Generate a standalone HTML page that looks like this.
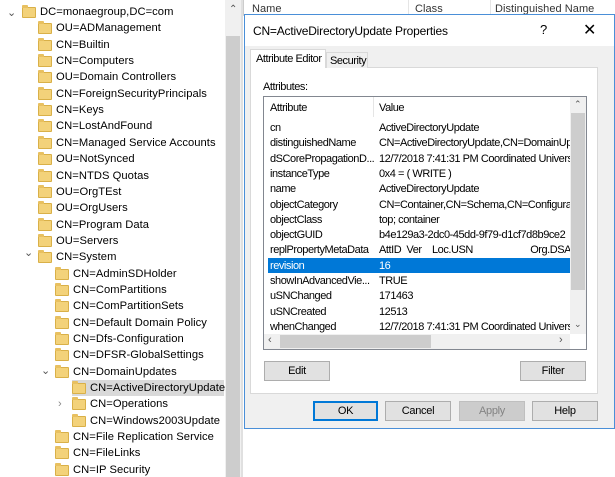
<!DOCTYPE html><html><head><style>
*{margin:0;padding:0;box-sizing:border-box}
body{width:615px;height:477px;overflow:hidden;background:#fff;position:relative;font-family:"Liberation Sans",sans-serif;}
.a{position:absolute;white-space:nowrap}
.t{font-size:11.2px;color:#000;letter-spacing:0.05px}
.f{position:absolute;width:14px;height:11px;background:#f3d27a;border:1px solid #d9b048;border-radius:1px}
.f:before{content:"";position:absolute;left:-1px;top:-3px;width:6px;height:3px;background:#e8c060;border-radius:1px 1px 0 0}
.d{font-size:11px;letter-spacing:-0.45px;color:#000}
.btn{position:absolute;height:20px;background:#e1e1e1;border:1px solid #adadad;font-size:11px;text-align:center;line-height:18px;letter-spacing:-0.3px}
</style></head><body>
<div class="a" style="left:243px;top:0;width:372px;height:16px;border-bottom:1px solid #e5e5e5;border-left:1px solid #ccc"></div>
<div class="a t" style="left:252px;top:3px;font-size:11px;color:#333">Name</div>
<div class="a t" style="left:415px;top:3px;font-size:11px;color:#333">Class</div>
<div class="a t" style="left:495px;top:3px;font-size:11px;color:#333">Distinguished Name</div>
<div class="a" style="left:490px;top:0;width:1px;height:15px;background:#e5e5e5"></div>
<div class="a" style="left:408px;top:0;width:1px;height:15px;background:#e5e5e5"></div>
<div class="a" style="left:225px;top:0;width:16px;height:477px;background:#f0f0f0"></div>
<div class="a" style="left:226px;top:36px;width:14px;height:441px;background:#cdcdcd"></div>
<div class="a" style="left:229px;top:4px;font-size:10px;color:#555">&#8963;</div>
<div class="a" style="left:241px;top:0;width:2px;height:477px;background:#e0e0e0"></div>
<div class="a" style="left:72px;top:380px;width:152px;height:16px;background:#d9d9d9"></div>
<div class="a" style="left:7px;top:6px;font-size:11px;color:#555">&#8964;</div>
<div class="a" style="left:41px;top:364px;font-size:11px;color:#555">&#8964;</div>
<div class="a" style="left:58px;top:398px;font-size:11px;color:#888">&#8250;</div>
<div class="a" style="left:24px;top:246px;font-size:11px;color:#555">&#8964;</div>
<div id="tree"></div>
<script>
var items=[[22,"DC=monaegroup,DC=com"],[38,"OU=ADManagement"],[38,"CN=Builtin"],[38,"CN=Computers"],[38,"OU=Domain Controllers"],[38,"CN=ForeignSecurityPrincipals"],[38,"CN=Keys"],[38,"CN=LostAndFound"],[38,"CN=Managed Service Accounts"],[38,"OU=NotSynced"],[38,"CN=NTDS Quotas"],[38,"OU=OrgTEst"],[38,"OU=OrgUsers"],[38,"CN=Program Data"],[38,"OU=Servers"],[38,"CN=System"],[55,"CN=AdminSDHolder"],[55,"CN=ComPartitions"],[55,"CN=ComPartitionSets"],[55,"CN=Default Domain Policy"],[55,"CN=Dfs-Configuration"],[55,"CN=DFSR-GlobalSettings"],[55,"CN=DomainUpdates"],[72,"CN=ActiveDirectoryUpdate"],[72,"CN=Operations"],[72,"CN=Windows2003Update"],[55,"CN=File Replication Service"],[55,"CN=FileLinks"],[55,"CN=IP Security"]];
var h="";items.forEach(function(it,i){var y=12+i*16.35;h+='<div class="f" style="left:'+it[0]+'px;top:'+(y-5)+'px"></div><div class="a t" style="left:'+(it[0]+18)+'px;top:'+(y-6)+'px">'+it[1]+'</div>';});
document.getElementById("tree").innerHTML=h;
</script>
<div class="a" style="left:244px;top:14px;width:371px;height:415px;background:#f0f0f0;border:1px solid #4a8fd8"></div>
<div class="a" style="left:245px;top:15px;width:369px;height:31px;background:#fff"></div>
<div class="a d" style="left:253px;top:24px;font-size:12px;letter-spacing:-0.2px">CN=ActiveDirectoryUpdate Properties</div>
<div class="a" style="left:540px;top:22px;font-size:13px">?</div>
<div class="a" style="left:583px;top:20px;font-size:16px;font-weight:300">&#10005;</div>
<div class="a" style="left:250px;top:67px;width:348px;height:327px;background:#fff;border:1px solid #d9d9d9"></div>
<div class="a" style="left:250px;top:49px;width:76px;height:19px;background:#fff;border:1px solid #d9d9d9;border-bottom:none"></div>
<div class="a d" style="left:256px;top:53px">Attribute Editor</div>
<div class="a" style="left:326px;top:52px;width:42px;height:16px;background:#f0f0f0;border:1px solid #d9d9d9;border-bottom:none"></div>
<div class="a d" style="left:330px;top:55px">Security</div>
<div class="a d" style="left:263px;top:81px">Attributes:</div>
<div class="a" style="left:263px;top:96px;width:324px;height:254px;background:#fff;border:1px solid #828790"></div>
<div class="a d" style="left:270px;top:102px">Attribute</div>
<div class="a d" style="left:379px;top:102px">Value</div>
<div class="a" style="left:373px;top:97px;width:1px;height:20px;background:#e5e5e5"></div>
<div class="a" style="left:268px;top:258px;width:302px;height:15px;background:#0078d7"></div>
<div id="rows"></div>
<script>
var r=[["cn","ActiveDirectoryUpdate"],["distinguishedName","CN=ActiveDirectoryUpdate,CN=DomainUpda"],["dSCorePropagationD...","12/7/2018 7:41:31 PM Coordinated Universa"],["instanceType","0x4 = ( WRITE )"],["name","ActiveDirectoryUpdate"],["objectCategory","CN=Container,CN=Schema,CN=Configuratio"],["objectClass","top; container"],["objectGUID","b4e129a3-2dc0-45dd-9f79-d1cf7d8b9ce2"],["replPropertyMetaData","AttID&nbsp; Ver&nbsp;&nbsp;&nbsp; Loc.USN&nbsp;&nbsp;&nbsp;&nbsp;&nbsp;&nbsp;&nbsp;&nbsp;&nbsp;&nbsp;&nbsp;&nbsp;&nbsp;&nbsp;&nbsp;&nbsp;&nbsp;&nbsp;&nbsp;&nbsp;&nbsp; Org.DSA"],["revision","16"],["showInAdvancedVie...","TRUE"],["uSNChanged","171463"],["uSNCreated","12513"],["whenChanged","12/7/2018 7:41:31 PM Coordinated Universa"]];
var h="";r.forEach(function(x,i){var y=122+i*15.3;var c=i==9?"color:#fff;":"";h+='<div class="a d" style="left:270px;top:'+y+'px;'+c+'">'+x[0]+'</div><div class="a d" style="left:379px;top:'+y+'px;width:191px;overflow:hidden;'+c+'">'+x[1]+'</div>';});
document.getElementById("rows").innerHTML=h;
</script>
<div class="a" style="left:570px;top:97px;width:16px;height:237px;background:#f0f0f0"></div>
<div class="a" style="left:571px;top:113px;width:14px;height:177px;background:#cdcdcd"></div>
<div class="a" style="left:574px;top:99px;font-size:9px;color:#555">&#8963;</div>
<div class="a" style="left:574px;top:319px;font-size:9px;color:#555">&#8964;</div>
<div class="a" style="left:264px;top:334px;width:306px;height:15px;background:#f0f0f0"></div>
<div class="a" style="left:280px;top:335px;width:151px;height:13px;background:#cdcdcd"></div>
<div class="a" style="left:268px;top:334px;font-size:11px;color:#555">&#8249;</div>
<div class="a" style="left:559px;top:334px;font-size:11px;color:#555">&#8250;</div>
<div class="btn" style="left:264px;top:361px;width:66px">Edit</div>
<div class="btn" style="left:520px;top:361px;width:66px">Filter</div>
<div class="btn" style="left:313px;top:401px;width:65px;border:1px solid #0078d7;box-shadow:inset 0 0 0 1px #0078d7">OK</div>
<div class="btn" style="left:385px;top:401px;width:66px">Cancel</div>
<div class="btn" style="left:459px;top:401px;width:66px;background:#ccc;border-color:#bfbfbf;color:#838383">Apply</div>
<div class="btn" style="left:532px;top:401px;width:66px">Help</div>
</body></html>
